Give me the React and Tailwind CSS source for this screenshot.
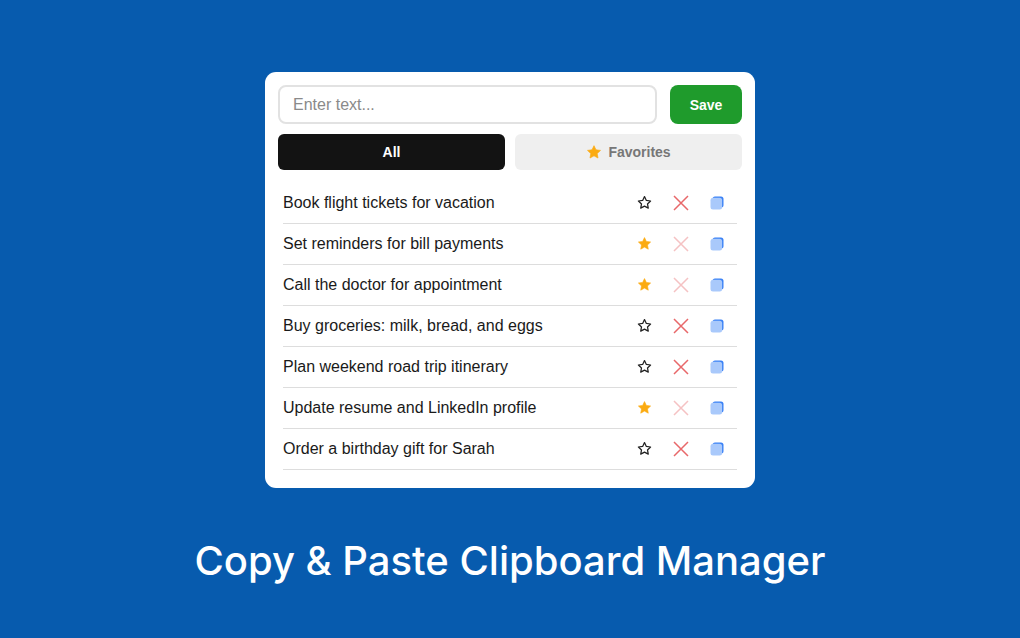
import React from 'react';

const items = [
  { text: 'Book flight tickets for vacation', fav: false },
  { text: 'Set reminders for bill payments', fav: true },
  { text: 'Call the doctor for appointment', fav: true },
  { text: 'Buy groceries: milk, bread, and eggs', fav: false },
  { text: 'Plan weekend road trip itinerary', fav: false },
  { text: 'Update resume and LinkedIn profile', fav: true },
  { text: 'Order a birthday gift for Sarah', fav: false },
];

const starPath = 'M12 2.5l2.95 6.2 6.8.9-4.98 4.7 1.27 6.75L12 17.75 5.96 21.05l1.27-6.75L2.25 9.6l6.8-.9z';

const Star = ({ filled, className }) => (
  <svg viewBox="0 0 24 24" className={className} fill={filled ? '#fbab12' : 'none'} stroke={filled ? '#fbab12' : '#222222'} strokeWidth={filled ? 1 : 2} strokeLinejoin="round">
    <path d={starPath} />
  </svg>
);

const Cross = ({ faded }) => (
  <svg viewBox="0 0 16 16" className={`w-4 h-4 ${faded ? 'opacity-40' : ''}`} fill="none" stroke="#e8686a" strokeWidth="1.5">
    <path d="M1 1l14 14M15 1L1 15" />
  </svg>
);

const Copy = () => (
  <svg viewBox="0 0 14 14" className="w-[14px] h-[14px]">
    <rect x="2.5" y="0.5" width="11" height="11" rx="2.5" fill="#3b82f6" />
    <rect x="0.5" y="1.8" width="11.6" height="11.7" rx="2.5" fill="#a9c9fb" />
  </svg>
);

const App = () => {
  return (
    <div className="w-[1020px] h-[638px] bg-[#075bae] flex flex-col items-center pt-[72px] font-['Liberation_Sans',sans-serif]">
      <div className="w-[490px] h-[416px] bg-white rounded-[11px] p-[13px]">
        <div className="flex gap-[13px] h-[39px]">
          <div className="flex-1 flex items-center border-2 border-[#e2e2e2] rounded-lg px-[13px] text-base text-[#8a8a8a]">
            Enter text...
          </div>
          <button className="w-[72px] bg-[#1f9b2c] rounded-lg text-white text-sm font-bold">Save</button>
        </div>
        <div className="flex gap-[10px] mt-[10px] h-[36px]">
          <button className="flex-1 bg-[#131313] rounded-md text-white text-sm font-bold">All</button>
          <button className="flex-1 bg-[#efefef] rounded-md text-[#777777] text-sm font-bold flex items-center justify-center gap-[6px]">
            <Star filled className="w-4 h-4" />
            Favorites
          </button>
        </div>
        <ul className="mt-[13px] ml-[5px] mr-[5px]">
          {items.map((item) => (
            <li key={item.text} className="h-[41px] flex items-center border-b border-[#dddddd] pb-px text-base text-[#1a1a1a]">
              <span className="flex-1">{item.text}</span>
              <div className="flex items-center">
                <div className="w-4 flex justify-center"><Star filled={item.fav} className="w-[15px] h-[15px]" /></div>
                <div className="w-4 ml-[21px] flex justify-center"><Cross faded={item.fav} /></div>
                <div className="w-[14px] ml-[21px] mr-[13px] flex justify-center"><Copy /></div>
              </div>
            </li>
          ))}
        </ul>
      </div>
      <h1 className="mt-[48px] text-[40px] leading-[50px] font-medium text-white font-['Inter',sans-serif]">
        Copy &amp; Paste Clipboard Manager
      </h1>
    </div>
  );
};

export default App;
